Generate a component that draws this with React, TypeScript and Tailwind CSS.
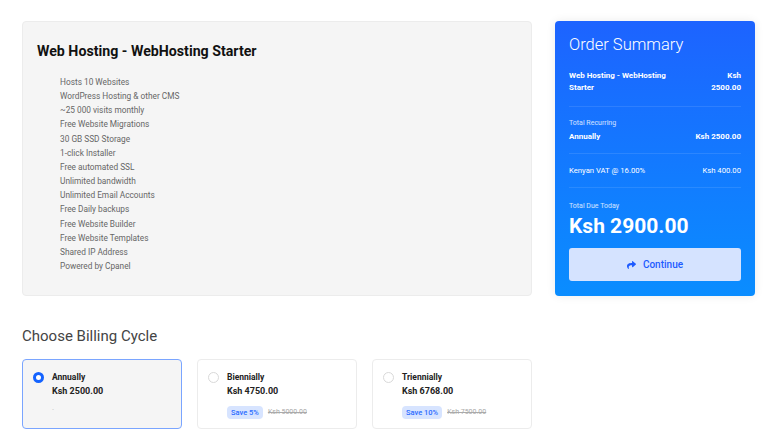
const features = [
  "Hosts 10 Websites",
  "WordPress Hosting & other CMS",
  "~25 000 visits monthly",
  "Free Website Migrations",
  "30 GB SSD Storage",
  "1-click Installer",
  "Free automated SSL",
  "Unlimited bandwidth",
  "Unlimited Email Accounts",
  "Free Daily backups",
  "Free Website Builder",
  "Free Website Templates",
  "Shared IP Address",
  "Powered by Cpanel",
];

const cycles = [
  { name: "Annually", price: "Ksh 2500.00", selected: true },
  { name: "Biennially", price: "Ksh 4750.00", save: "Save 5%", old: "Ksh 5000.00" },
  { name: "Triennially", price: "Ksh 6768.00", save: "Save 10%", old: "Ksh 7500.00" },
];

function ShareIcon() {
  return (
    <svg width="9" height="8" viewBox="0 0 512 448" fill="currentColor">
      <path d="M503.7 189.8L327.7 37.9C312.3 24.6 288 35.4 288 56v80.1C127.4 137.9 0 170.1 0 322.3c0 61.4 39.6 122.3 83.3 154.1 13.7 9.9 33.1-2.5 28.1-18.6C66.1 312.8 132.9 274.3 288 272.1V360c0 20.7 24.3 31.4 39.7 18.2l176-152c11.1-9.6 11.1-26.8 0-36.4z" transform="translate(0,-32)" />
    </svg>
  );
}

export default function App() {
  return (
    <div className="w-[768px] h-[443px] bg-white overflow-hidden font-['Roboto',sans-serif] pl-[22px] pt-[21px]">
      <div className="flex gap-[23px]">
        <div className="w-[510px] h-[275px] bg-[#f5f5f5] border border-[#ececec] rounded-[4px] pl-[14px] pt-[20px]">
          <h1 className="text-[14.2px] font-bold text-[#111] leading-[18px]">Web Hosting - WebHosting Starter</h1>
          <ul className="mt-[15px] pl-[23px] text-[8.3px] text-[#666] leading-[14.15px]">
            {features.map((f) => (
              <li key={f}>{f}</li>
            ))}
          </ul>
        </div>
        <div className="w-[200px] h-[275px] rounded-[4px] bg-gradient-to-b from-[#1d63ff] to-[#0a8dff] shadow-[0_0_10px_rgba(0,0,0,0.08)] px-[14px] pt-[14px] text-white">
          <h2 className="text-[16.5px] font-light leading-[20px]">Order Summary</h2>
          <div className="mt-[15px] flex justify-between text-[8px] font-bold leading-[12px]">
            <span>Web Hosting - WebHosting<br />Starter</span>
            <span className="text-right">Ksh<br />2500.00</span>
          </div>
          <div className="mt-[12px] border-t border-white/10" />
          <div className="pt-[11px] text-[7px] text-white/80 leading-[10px]">Total Recurring</div>
          <div className="mt-[3px] flex justify-between text-[8px] font-bold leading-[12px]">
            <span>Annually</span>
            <span>Ksh 2500.00</span>
          </div>
          <div className="mt-[10px] border-t border-white/10" />
          <div className="pt-[11px] pb-[10px] flex justify-between text-[7.7px] leading-[12px]">
            <span>Kenyan VAT @ 16.00%</span>
            <span>Ksh 400.00</span>
          </div>
          <div className="border-t border-white/10" />
          <div className="pt-[13px] text-[7px] text-white/80 leading-[10px]">Total Due Today</div>
          <div className="mt-[2px] text-[21px] font-bold leading-[26px]">Ksh 2900.00</div>
          <button className="mt-[9px] w-full h-[33px] rounded-[3px] bg-[#d5e3ff] text-[#1e5bff] text-[10px] font-medium flex items-center justify-center gap-[7px]">
            <ShareIcon />
            Continue
          </button>
        </div>
      </div>
      <h2 className="mt-[30px] text-[15px] text-[#444] leading-[20px]">Choose Billing Cycle</h2>
      <div className="mt-[13px] w-[510px] grid grid-cols-3 gap-[15px]">
        {cycles.map((c) => (
          <div
            key={c.name}
            className={
              c.selected
                ? "h-[70px] rounded-[4px] border border-[#7aa5ff] bg-[#f5f5f5] pl-[10px] pt-[11px] flex gap-[8px]"
                : "h-[70px] rounded-[4px] border border-[#ececec] bg-white pl-[10px] pt-[11px] flex gap-[8px]"
            }
          >
            {c.selected ? (
              <div className="mt-[1px] w-[11px] h-[11px] rounded-full border-[3px] border-[#1463ff] bg-white" />
            ) : (
              <div className="mt-[1px] w-[11px] h-[11px] rounded-full border border-[#d9d9d9] bg-white" />
            )}
            <div className="text-[8.5px] font-bold text-[#222] leading-[13px]">
              <div>{c.name}</div>
              <div className="mt-[1px] text-[9px]">{c.price}</div>
              {c.save ? (
                <div className="mt-[8px] flex items-center gap-[5px]">
                  <span className="px-[4px] h-[13px] flex items-center rounded-[4px] bg-[#d7e4ff] text-[#2a6cff] text-[7.5px] font-medium">{c.save}</span>
                  <span className="text-[7px] font-normal text-[#aaa] line-through">{c.old}</span>
                </div>
              ) : (
                <div className="mt-[3px] text-[8px] font-normal text-[#bbb]">.</div>
              )}
            </div>
          </div>
        ))}
      </div>
    </div>
  );
}
